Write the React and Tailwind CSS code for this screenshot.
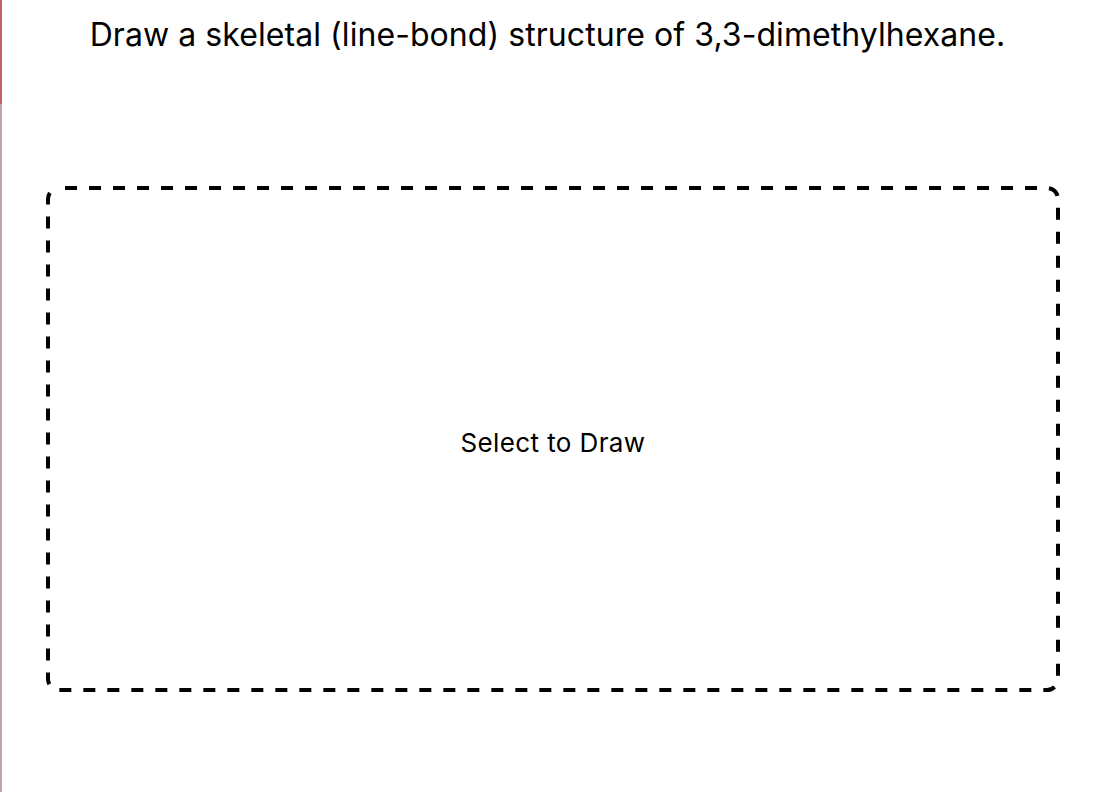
import React from "react";

export default function App() {
  return (
    <div className="relative h-[792px] w-[1106px] overflow-hidden bg-white font-['Inter','Liberation_Sans',sans-serif] text-black">
      {/* thin edge strip from the neighbouring pane */}
      <div className="absolute left-0 top-0 flex h-full w-[2px] flex-col">
        <div className="h-[104px] bg-[#c4626c]" />
        <div className="flex-1 bg-[#bfa3a7]" />
      </div>

      <div className="flex flex-col items-center pt-[14px] pr-[11px]">
        <h1 className="text-[32px] leading-[42px] font-normal tracking-[0.002em]">
          Draw a skeletal (line-bond) structure of 3,3-dimethylhexane.
        </h1>
      </div>

      {/* drawing area */}
      <div className="relative mt-[130px] ml-[46px] flex h-[506px] w-[1014px] items-center justify-center rounded-xl">
        <svg className="pointer-events-none absolute inset-0" width="1014" height="506">
          <rect
            x="2"
            y="2"
            width="1010"
            height="502"
            rx="11"
            fill="none"
            stroke="#000"
            strokeWidth="4"
            strokeDasharray="12 12"
            strokeDashoffset="-6"
          />
        </svg>
        <span className="mt-[7px] text-[26px] tracking-[0.015em]">Select to Draw</span>
      </div>
    </div>
  );
}
